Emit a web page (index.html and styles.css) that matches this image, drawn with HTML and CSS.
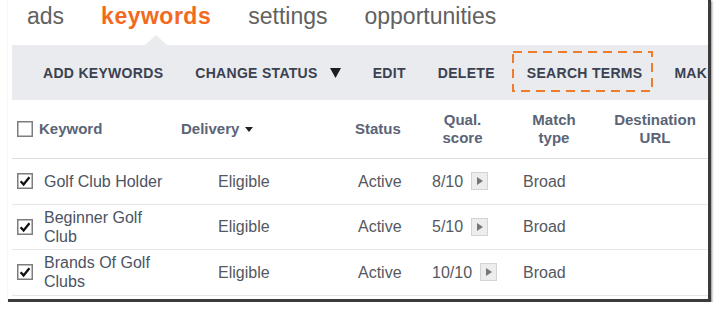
FILE: index.html
```html
<!DOCTYPE html>
<html>
<head>
<meta charset="utf-8">
<link rel="stylesheet" href="styles.css">
</head>
<body>
<div class="frame">
  <nav class="tabs">
    <span class="tab">ads</span>
    <span class="tab active">keywords</span>
    <span class="tab">settings</span>
    <span class="tab">opportunities</span>
  </nav>
  <div class="toolbar">
    <span class="tool">ADD KEYWORDS</span>
    <span class="tool">CHANGE STATUS <svg class="caret" width="11" height="12" viewBox="0 0 11 12"><path d="M0 1 H11 L5.5 11 Z" fill="#1e1e1e"/></svg></span>
    <span class="tool">EDIT</span>
    <span class="tool">DELETE</span>
    <span class="tool highlight">SEARCH TERMS<svg class="dash" width="141" height="41" viewBox="0 0 141 41"><rect x="1" y="1" width="139" height="39" fill="none" stroke="#ef7b2c" stroke-width="2" stroke-dasharray="9 6"/></svg></span>
    <span class="tool">MAKE ACTIVE</span>
  </div>
  <div class="grid head">
    <div class="cell c1"><svg class="cb" width="16" height="16" viewBox="0 0 16 16"><rect x="0.75" y="0.75" width="14.5" height="14.5" fill="#fff" stroke="#7d7d7d" stroke-width="1.5"/></svg><span class="hk">Keyword</span></div>
    <div class="cell c2">Delivery <svg class="sort" width="8" height="5" viewBox="0 0 8 5"><path d="M0 0 H8 L4 5 Z" fill="#222"/></svg></div>
    <div class="cell c3">Status</div>
    <div class="cell c4 center">Qual.<br>score</div>
    <div class="cell c5 center">Match<br>type</div>
    <div class="cell c6 center">Destination<br>URL</div>
  </div>
  <div class="grid row">
    <div class="cell c1"><svg class="cb" width="16" height="16" viewBox="0 0 16 16"><rect x="0.75" y="0.75" width="14.5" height="14.5" fill="#fff" stroke="#7d7d7d" stroke-width="1.5"/><path d="M3.6 8.2 L6.6 11.4 L12.4 4.2" fill="none" stroke="#111" stroke-width="2.3"/></svg><span class="kw">Golf Club Holder</span></div>
    <div class="cell c2">Eligible</div>
    <div class="cell c3">Active</div>
    <div class="cell c4"><span>8/10</span><span class="qbtn"><svg width="6" height="8" viewBox="0 0 6 8"><path d="M0 0 L6 4 L0 8 Z" fill="#777"/></svg></span></div>
    <div class="cell c5">Broad</div>
    <div class="cell c6"></div>
  </div>
  <div class="grid row">
    <div class="cell c1"><svg class="cb" width="16" height="16" viewBox="0 0 16 16"><rect x="0.75" y="0.75" width="14.5" height="14.5" fill="#fff" stroke="#7d7d7d" stroke-width="1.5"/><path d="M3.6 8.2 L6.6 11.4 L12.4 4.2" fill="none" stroke="#111" stroke-width="2.3"/></svg><span class="kw">Beginner Golf Club</span></div>
    <div class="cell c2">Eligible</div>
    <div class="cell c3">Active</div>
    <div class="cell c4"><span>5/10</span><span class="qbtn"><svg width="6" height="8" viewBox="0 0 6 8"><path d="M0 0 L6 4 L0 8 Z" fill="#777"/></svg></span></div>
    <div class="cell c5">Broad</div>
    <div class="cell c6"></div>
  </div>
  <div class="grid row">
    <div class="cell c1"><svg class="cb" width="16" height="16" viewBox="0 0 16 16"><rect x="0.75" y="0.75" width="14.5" height="14.5" fill="#fff" stroke="#7d7d7d" stroke-width="1.5"/><path d="M3.6 8.2 L6.6 11.4 L12.4 4.2" fill="none" stroke="#111" stroke-width="2.3"/></svg><span class="kw">Brands Of Golf Clubs</span></div>
    <div class="cell c2">Eligible</div>
    <div class="cell c3">Active</div>
    <div class="cell c4"><span>10/10</span><span class="qbtn"><svg width="6" height="8" viewBox="0 0 6 8"><path d="M0 0 L6 4 L0 8 Z" fill="#777"/></svg></span></div>
    <div class="cell c5">Broad</div>
    <div class="cell c6"></div>
  </div>
</div>
</body>
</html>
```
FILE: styles.css
```css
html, body {
  margin: 0;
  padding: 0;
  background: #fff;
}
body {
  font-family: "Liberation Sans", Arial, sans-serif;
}
.frame {
  margin-left: 8px;
  width: 700px;
  height: 299px;
  border-right: 3px solid #3c3c3c;
  border-bottom: 3px solid #3c3c3c;
  box-shadow: 1px 1px 2px rgba(0, 0, 0, 0.45);
  overflow: hidden;
  background: #fff;
}
.tabs {
  display: flex;
  gap: 37px;
  height: 45px;
  box-sizing: border-box;
  padding: 3px 0 0 19px;
  font-size: 23px;
  line-height: 27px;
  color: #616161;
}
.tab {
  position: relative;
}
.tab.active {
  color: #f26a1d;
  font-weight: bold;
  letter-spacing: 0.5px;
}
.tab.active::after {
  content: "";
  position: absolute;
  left: 50%;
  margin-left: -11px;
  top: 32px;
  border-left: 11px solid transparent;
  border-right: 11px solid transparent;
  border-bottom: 10px solid #e9ebee;
}
.toolbar {
  margin-left: 4px;
  height: 55px;
  background: #e9ebee;
  display: flex;
  align-items: stretch;
  padding-left: 15px;
  white-space: nowrap;
  font-size: 14px;
  font-weight: bold;
  letter-spacing: 0.3px;
  color: #3b4150;
}
.tool {
  display: flex;
  align-items: center;
  padding: 0 16px;
  position: relative;
  flex: none;
}
.caret {
  margin-left: 12px;
}
.dash {
  position: absolute;
  left: 1px;
  top: 6px;
}
.grid {
  display: grid;
  grid-template-columns: 164px 164px 80px 85px 98px 104px;
  margin-left: 4px;
}
.head {
  height: 58px;
  border-bottom: 1px solid #dedede;
  font-size: 15px;
  font-weight: bold;
  line-height: 18px;
  color: #5a6476;
}
.row {
  height: 44.5px;
  border-bottom: 1px solid #e6e6e6;
  font-size: 16px;
  line-height: 19px;
  color: #545860;
}
.cell {
  display: flex;
  align-items: center;
}
.center {
  justify-content: center;
  text-align: center;
}
.c1 {
  padding-left: 5px;
}
.hk {
  margin-left: 6px;
}
.kw {
  margin-left: 11px;
  color: #4b5364;
  max-width: 132px;
}
.head .c2 {
  padding-left: 5px;
}
.sort {
  margin-left: 6px;
}
.head .c3 {
  padding-left: 15px;
}
.row .c2 {
  padding-left: 42px;
}
.row .c3 {
  padding-left: 18px;
}
.row .c4 {
  padding-left: 12px;
}
.row .c5 {
  padding-left: 18px;
}
.qbtn {
  width: 17px;
  height: 18px;
  box-sizing: border-box;
  margin-left: 8px;
  background: #ededed;
  border: 1px solid #d3d3d3;
  display: flex;
  align-items: center;
  justify-content: center;
}
```
